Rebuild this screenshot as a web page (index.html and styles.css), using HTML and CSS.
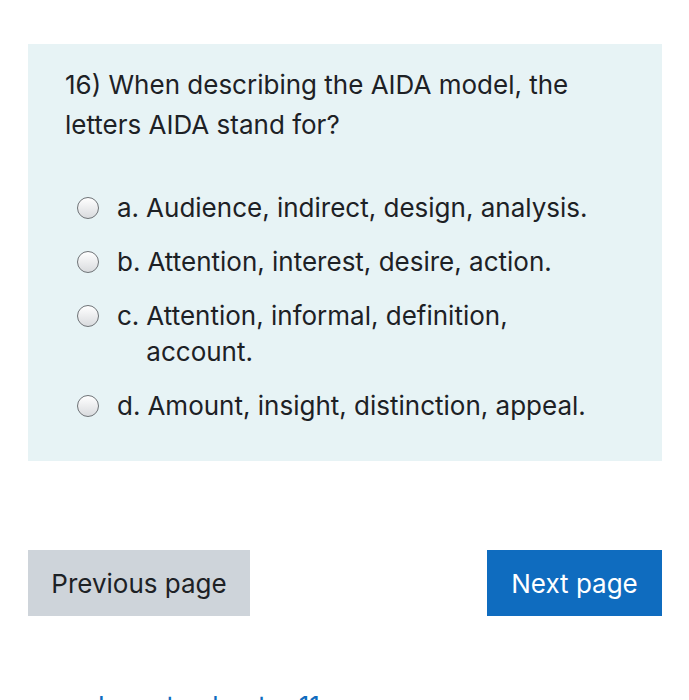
FILE: index.html
```html
<!DOCTYPE html>
<html lang="en">
<head>
<meta charset="utf-8">
<title>Quiz question 16</title>
<link rel="stylesheet" href="styles.css">
</head>
<body>
<main class="page">
  <section class="question">
    <p class="qtext">16) When describing the AIDA model, the letters AIDA stand for?</p>
    <ul class="answers">
      <li class="answer"><span class="radio"></span><span class="num">a.</span><span class="label">Audience, indirect, design, analysis.</span></li>
      <li class="answer"><span class="radio"></span><span class="num">b.</span><span class="label">Attention, interest, desire, action.</span></li>
      <li class="answer"><span class="radio"></span><span class="num">c.</span><span class="label">Attention, informal, definition, account.</span></li>
      <li class="answer"><span class="radio"></span><span class="num">d.</span><span class="label">Amount, insight, distinction, appeal.</span></li>
    </ul>
  </section>
  <nav class="pager">
    <button class="btn btn-secondary">Previous page</button>
    <button class="btn btn-primary">Next page</button>
  </nav>
  <p class="jump"><a href="#">Jump to chapter 11</a></p>
</main>
</body>
</html>
```

FILE: styles.css
```css
html, body {
  margin: 0;
  padding: 0;
  background: #ffffff;
  overflow: hidden;
}

body {
  font-family: Inter, "Noto Sans", "Liberation Sans", sans-serif;
  color: #1d2125;
}

.page {
  padding: 44px 27px 0 28px;
}

.question {
  background: #e7f3f5;
  padding: 21px 37px 37px 37px;
}

.qtext {
  margin: 0;
  font-size: 26px;
  line-height: 40px;
}

.answers {
  list-style: none;
  margin: 45px 0 0 0;
  padding: 0 0 0 12px;
  display: flex;
  flex-direction: column;
  gap: 18px;
}

.answer {
  display: flex;
  align-items: flex-start;
  font-size: 26px;
  line-height: 36px;
}

.radio {
  flex: none;
  width: 20px;
  height: 20px;
  margin: 7px 18px 0 0;
  border-radius: 50%;
  border: 1.5px solid #6f7377;
  background: linear-gradient(#ffffff, #d9dbde);
}

.num {
  flex: none;
  margin-right: 7px;
}

.label {
  max-width: 450px;
}

.pager {
  display: flex;
  justify-content: space-between;
  margin-top: 89px;
}

.btn {
  font-family: inherit;
  font-size: 26px;
  height: 66px;
  padding: 0 20px;
  border: none;
  border-radius: 0;
}

.btn-secondary {
  background: #ced4da;
  color: #1d2125;
  width: 222px;
}

.btn-primary {
  background: #0f6cbf;
  color: #ffffff;
  width: 175px;
}

.jump {
  margin: 72px 0 0 62px;
  font-size: 26px;
  line-height: 36px;
}

.jump a {
  color: #0f6cbf;
  text-decoration: none;
}
```
